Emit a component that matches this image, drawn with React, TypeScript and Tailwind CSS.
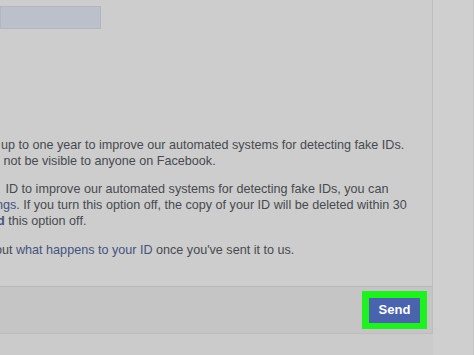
import React from "react";

export default function App() {
  const txt = "text-[#474a4f]";
  const link = "text-[#445380]";
  return (
    <div
      className="w-[474px] h-[355px] overflow-hidden bg-[#cecece] flex"
      style={{ fontFamily: '"Liberation Sans", Arial, sans-serif' }}
    >
      <div className="w-[433px] shrink-0 flex flex-col">
        <div className="w-[433px] h-[334px] border-r border-b border-[#bdbdbd] flex flex-col bg-[#cdcdcd]">
          <div className="h-[286px] flex flex-col">
            <div className="mt-[6px] w-[101px] h-[23px] bg-[#bcc0cb] border border-[#b2b6bf]" />
            <div className={`mt-[108px] text-[12.6px] leading-[16px] ${txt} whitespace-pre`}>
              <div className="ml-[1px]">up to one year to improve our automated systems for detecting fake IDs.</div>
              <div> not be visible to anyone on Facebook.</div>
              <div className="mt-[12px] ml-[2px]"> ID to improve our automated systems for detecting fake IDs, you can</div>
              <div className="-ml-[4px]">
                <span className={link}>ngs</span>. If you turn this option off, the copy of your ID will be deleted within 30
              </div>
              <div className="-ml-[3px]">
                <span className={`${link} font-bold`}>d</span> this option off.
              </div>
              <div className="mt-[13px] -ml-[5px]">
                out <span className={link}>what happens to your ID</span> once you've sent it to us.
              </div>
            </div>
          </div>
          <div className="flex-1 bg-[#c5c5c5] border-t border-[#bababa] flex justify-end items-center pr-[5px]">
            <div className="w-[65px] h-[38px] bg-[#1ff01f] flex items-center justify-center">
              <div className="w-[51px] h-[25px] bg-[#4a63ad] flex items-center justify-center text-white font-bold text-[13px]">
                Send
              </div>
            </div>
          </div>
        </div>
        <div className="flex-1 bg-[#cbcbcb]" />
      </div>
      <div className="flex-1 bg-[#cfcfcf] border-r border-[#c4c4c4]" />
    </div>
  );
}
